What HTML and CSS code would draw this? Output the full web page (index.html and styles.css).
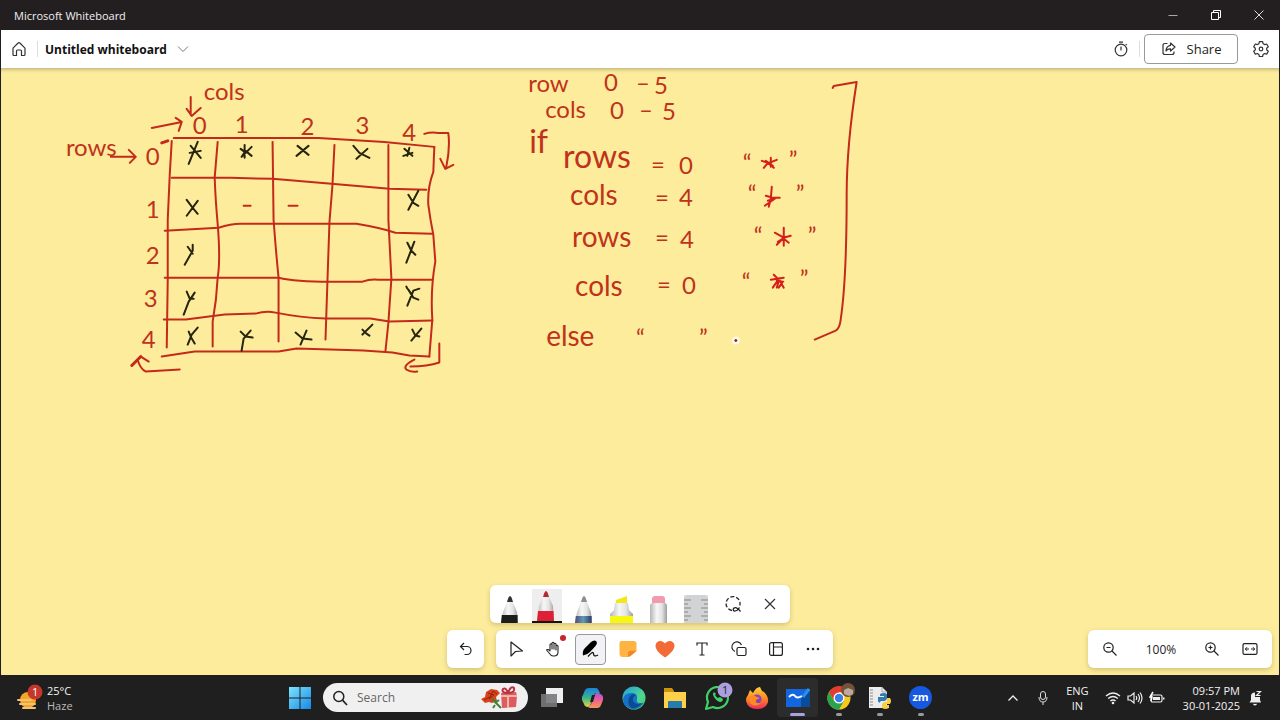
FILE: index.html
```html
<!DOCTYPE html>
<html lang="en">
<head>
<meta charset="utf-8">
<title>Microsoft Whiteboard</title>
<link rel="stylesheet" href="styles.css">
</head>
<body>
<header class="titlebar">
  <span class="titlebar-name">Microsoft Whiteboard</span>
  <div class="window-controls">
    <button aria-label="Minimize"><svg width="12" height="12" viewBox="0 0 12 12"><path d="M1.500 6.500h9" stroke="#a9a7a8"/></svg></button>
    <button aria-label="Restore"><svg width="12" height="12" viewBox="0 0 12 12"><path d="M1.500 3.500h7v7h-7zM3.500 3.500v-2h7v7h-2" stroke="#fff"/></svg></button>
    <button aria-label="Close"><svg width="12" height="12" viewBox="0 0 12 12"><path d="M1.500 1.500l9 9M10.500 1.500l-9 9" stroke="#ddd"/></svg></button>
  </div>
</header>

<nav class="appbar">
  <button class="icon-btn" aria-label="Home"><svg width="16" height="16" viewBox="0 0 16 16"><path d="M2 7.200 7.100 2q.9-.8 1.800 0L14 7.200v6.300q0 1-1 1h-2.500V10q0-1-1-1h-3q-1 0-1 1v4.500H3q-1 0-1-1z" stroke="#333" stroke-width="1.200"/></svg></button>
  <span class="divider"></span>
  <button class="board-name">Untitled whiteboard <svg width="12" height="8" viewBox="0 0 12 8"><path d="M1 1.500l5 5 5-5" stroke="#777"/></svg></button>
  <div class="appbar-end">
    <button class="icon-btn" aria-label="Timer"><svg width="16" height="16" viewBox="0 0 16 16"><circle cx="8" cy="9" r="5.800" stroke="#333" stroke-width="1.200"/><path d="M8 5.500V9.500M6 1.200h4M12.800 3.200l1 1" stroke="#333" stroke-width="1.200"/></svg></button>
    <span class="divider"></span>
    <button class="share"><svg width="16" height="16" viewBox="0 0 16 16"><path d="M6.500 2.500H4Q2 2.500 2 4.500v7q0 2 2 2h7q2 0 2-2v-1M9.500 2l4.500 4-4.500 4V7.800Q6.500 7.600 5 10q.2-5 4.500-5.600z" stroke="#333" stroke-width="1.200" stroke-linejoin="round"/></svg>Share</button>
    <button class="icon-btn" aria-label="Settings"><svg width="18" height="18" viewBox="0 0 18 18"><path d="M7.400 1.600h3.200l.5 2.100 1.500.9 2.100-.6 1.600 2.800-1.600 1.400v1.700l1.600 1.400-1.600 2.800-2.100-.6-1.500.9-.5 2.100H7.400l-.5-2.100-1.500-.9-2.100.6-1.600-2.800 1.600-1.400V8.200L1.700 6.800 3.300 4l2.100.6 1.500-.9z" stroke="#333" stroke-width="1.200" stroke-linejoin="round"/><circle cx="9" cy="9" r="1.800" stroke="#333" stroke-width="1.200"/></svg></button>
  </div>
</nav>

<main class="board">
  <svg class="ink" viewBox="0 68 1280 607" preserveAspectRatio="xMinYMin meet">
    <g class="red">
      <path d="M173 138H318L384 142 434 147M171 178H230L272 179 331 184 389 189 426 190M164 231Q180 230 218 228 230 224 240 224H356Q380 228 395 233L432 234M164 278H278Q295 282 330 282H362Q370 279 378 280H432M163 320H185L224 315 255 314Q265 311 275 313 300 318 325 319H370L389 322 432 321M161 357 194 352H278L296 349 363 351 392 353 409 356 429 357"/>
      <path d="M171 141 169 175 167 220V280L166 348M217 142 214 178Q215 203 217 224 220 260 217 278 216 300 212 322V347M272 142 273 220Q275 248 278 278V342M334 145 332 185 329 222 327 280 325 340M388 145 388 220 391 279 388 323 385 352M434 147 433 172Q427 188 428 205 430 220 433 235L435 262Q430 290 432 320L429 357"/>
      <path d="M151 128 181 122M175 118 181 122 178 131M190 97V115M186 109 191 116 200 108M110 157H135M128 150 135 157 129 163M424 134Q430 132 438 133H448Q450 148 446 167M440 159 445 169 453 165M439 344V363Q427 367 410 367M414 360Q402 366 406 370 410 373 417 372"/>
      <path d="M140 357 148 362M137 361Q140 370 145 372L179 370"/>
      <path class="heavy" d="M131 366 140 357M161 143 167 141"/>
      <path d="M833 88 834 86 857 82Q847 145 847 195 847 280 841 320 840 329 836 331L815 340"/>
      <path d="M243 206h7M288 206h9"/>
    </g>
    <g class="stars">
      <path d="M762 161 769 163 777 160M771 158V167M774 168 768 163 764 168M766 161 773 166"/>
      <path d="M772 187 771 199 769 207M766 196 773 198 780 198M775 199 765 206M768 201 774 199"/>
      <path d="M784 228V246M775 233 784 238 791 236M784 238 777 245M784 239 789 243M778 242 786 237"/>
      <path d="M774 275 780 281 784 288M771 280 784 278M777 288 780 278 773 288M777 281 783 282 779 288"/>
    </g>
    <g class="black">
      <path d="M197 142 188 164M190 146 200 158M189 153 200 151M244 145V158M251 147 241 157 245 151 251 156M240 149 244 152M297 146 308 155M308 146 296 156M353 146 359 153 369 158M367 149 356 159M404 149 412 156M412 153 403 156M409 148 407 156"/>
      <path d="M186 200 192 208 197 214M197 201 186 216M408 195 413 203 418 206M418 191 408 210M187 247 192 254M192 245V251L184 265M407 243 411 251 415 255M414 242 406 263M186 292 189 299H193M194 293 188 302 183 315M408 290 413 298 418 300M419 289 413 291 407 306M406 287l1 2"/>
      <path d="M188 332 191 339 194 344M197 328 191 335 187 345M240 332 245 337 252 338M250 331 243 339 241 351M295 333 302 339 311 340M306 331 300 345M362 330 366 334 369 336M372 325 362 335M412 330 415 336 419 337M421 329 411 341"/>
    </g>
    <g class="hand">
      <text x="203" y="100">cols</text>
      <text x="65" y="156">rows</text>
      <text x="145" y="165">0</text>
      <text x="192" y="134">0</text><text x="234" y="133">1</text><text x="300" y="135">2</text><text x="355" y="134">3</text><text x="402" y="141">4</text>
      <text x="145" y="218">1</text><text x="145" y="264">2</text><text x="143" y="307">3</text><text x="141" y="348">4</text>
      <text x="528" y="92">row</text><text x="604" y="91">0</text><text x="636" y="91">–</text><text x="654" y="94">5</text>
      <text x="545" y="118">cols</text><text x="610" y="119">0</text><text x="639" y="118">–</text><text x="662" y="120">5</text>
      <text class="tall" x="529" y="153">if</text>
      <text class="tall" x="563" y="168">rows</text><text x="651" y="173">=</text><text x="679" y="174">0</text><text x="743" y="171">“</text><text x="789" y="168">”</text>
      <text class="large" x="570" y="205">cols</text><text x="655" y="206">=</text><text x="679" y="206">4</text><text x="748" y="202">“</text><text x="796" y="202">”</text>
      <text class="large" x="572" y="247">rows</text><text x="655" y="246">=</text><text x="680" y="248">4</text><text x="754" y="244">“</text><text x="808" y="244">”</text>
      <text class="large" x="575" y="296">cols</text><text x="657" y="293">=</text><text x="682" y="294">0</text><text x="742" y="290">“</text><text x="800" y="287">”</text>
      <text class="large" x="546" y="346">else</text><text x="636" y="346">“</text><text x="699" y="346">”</text>
    </g>
    <circle cx="736" cy="341" r="4" fill="#fff" opacity=".75"/><circle cx="736" cy="341" r="1.500" fill="#8e211a"/>
  </svg>

  <div class="dock">
    <div class="panel pens">
      <button aria-label="Black pen"><svg width="30" height="32" viewBox="0 0 30 32"><path d="M5 32 7 21 12 9h4l5 12 1 11z" fill="url(#barrel)"/><path d="M11 11Q12.500 5 14 5t3 6z" fill="#333"/><path d="M5.800 24h15.800v8H5z" fill="#1c1c1c"/></svg></button>
      <button class="picked" aria-label="Red pen"><svg width="30" height="32" viewBox="0 0 30 32"><path d="M5 32 7 17 12 5h4l5 12 1 15z" fill="url(#barrel)"/><path d="M11 8Q12.500 2 14 2t3 6z" fill="#b42832"/><path d="M6 22h15.500l.5 10H5z" fill="#df1f36"/></svg></button>
      <button aria-label="Galaxy pen"><svg width="30" height="32" viewBox="0 0 30 32"><path d="M5 32 7 21 12 9h4l5 12 1 11z" fill="url(#barrel)"/><path d="M11 11Q12.500 5 14 5t3 6z" fill="#8b8e92"/><path d="M5.800 25h15.800v7H5z" fill="url(#galaxy)"/></svg></button>
      <button aria-label="Highlighter"><svg width="30" height="32" viewBox="0 0 30 32"><path d="M9 12V9l11-4v8z" fill="#f2e817"/><path d="M8 12h13l1 7 4 4v9H3v-9l4-4z" fill="url(#barrel)"/><path d="M3 25h23v7H3z" fill="#f6f814"/></svg></button>
      <button aria-label="Eraser"><svg width="30" height="32" viewBox="0 0 30 32"><path d="M8 13V8q0-3 3-3h7q3 0 3 3v5z" fill="#f29aae"/><path d="M6 15q0-3 3-3h11q3 0 3 3v17H6z" fill="url(#barrel)"/></svg></button>
      <button aria-label="Ruler"><svg width="30" height="32" viewBox="0 0 30 32"><path d="M3 6q0-2 2-2h20q2 0 2 2v26H3z" fill="#d2d3d4"/><path d="M3 9h7M3 13h4M3 17h7M3 21h4M3 25h7M3 29h4M27 9h-7M27 13h-4M27 17h-7M27 21h-4M27 25h-7M27 29h-4" stroke="#85888a"/></svg></button>
      <button class="mid" aria-label="Lasso select"><svg width="18" height="18" viewBox="0 0 18 18"><path d="M8 15.500A7 7 0 1 1 15.800 10.500" stroke="#222" stroke-width="1.300" stroke-dasharray="4 2"/><path d="M16.500 16.500q-4-5-6.500-3.500-1.500 2 0 3 3 .5 5.500-3.500" stroke="#222" stroke-width="1.300"/></svg></button>
      <button class="mid" aria-label="Close pens"><svg width="12" height="12" viewBox="0 0 12 12"><path d="M1 1l10 10M11 1 1 11" stroke="#333" stroke-width="1.200"/></svg></button>
    </div>
    <div class="tools">
      <div class="panel undo"><button aria-label="Undo"><svg width="16" height="16" viewBox="0 0 16 16"><path d="M6 2 2.500 5.500 6 9M2.500 5.500H9a4 4 0 0 1 0 8H6.500" stroke="#222" stroke-width="1.200"/></svg></button></div>
      <div class="panel toolbar">
        <button aria-label="Select"><svg width="18" height="18" viewBox="0 0 18 18"><path d="M3 2v14l4.500-4.500 7-.5z" stroke="#222" stroke-width="1.200" stroke-linejoin="round"/></svg></button>
        <button class="dot" aria-label="Pan"><svg width="18" height="18" viewBox="0 0 18 18"><path d="M5 10V4.500q1-1.500 2 0V9 3q1-1.500 2 0v6-5q1-1.500 2 0v6-4q1-1.200 2 0v6q0 4-4 4H8q-2 0-3.500-2.500L1.500 10q1.500-1.500 3.500 1z" stroke="#222" stroke-width="1.100" stroke-linejoin="round"/></svg></button>
        <button class="active" aria-label="Inking"><svg width="20" height="20" viewBox="0 0 20 20"><path d="M2 16.500Q1 12 4 9L10 3q3-2.500 5-1 2 2-.5 5L9 13Q6 16 2 16.500z" fill="#000"/><path d="M7 17.500q5-6 5.500-3 0 4 4.500 1.500" stroke="#111" stroke-width="1.300"/></svg></button>
        <button aria-label="Notes"><svg width="20" height="20" viewBox="0 0 20 20"><path d="M3.500 2H16q2.500 0 2.500 2.500V12q-7 6-9 6H4.500Q2 18 1.500 15.500V4q0-2 2-2z" fill="#ffb441"/><path d="M10 17.800v-3q0-3 3-3h5.300q-5.300 6-8.300 6z" fill="#f28729"/></svg></button>
        <button aria-label="Reactions"><svg width="20" height="20" viewBox="0 0 20 20"><path d="M10 18.500Q0 12 .5 6.500C1 1 7.500.5 10 4.500 12.500.5 19 1 19.500 6.500 20 12 10 18.500 10 18.500z" fill="#f36a36"/></svg></button>
        <button aria-label="Text"><svg width="16" height="16" viewBox="0 0 16 16"><path d="M3 4.500V2h10v2.500M8 2v12M5.500 14h5" stroke="#222" stroke-width="1.200"/></svg></button>
        <button aria-label="Shapes"><svg width="18" height="18" viewBox="0 0 18 18"><path d="M5 11.500A5 5 0 1 1 11.500 5" stroke="#222" stroke-width="1.200"/><rect x="7" y="7.500" width="9" height="8" rx="1.500" stroke="#222" stroke-width="1.200"/></svg></button>
        <button aria-label="Templates"><svg width="16" height="16" viewBox="0 0 16 16"><rect x="1.600" y="1.600" width="12.800" height="12.800" rx="2" stroke="#222" stroke-width="1.200"/><path d="M5.500 2v12M5.500 6h9" stroke="#222" stroke-width="1.200"/></svg></button>
        <button aria-label="More"><svg width="14" height="4" viewBox="0 0 14 4"><g fill="#222"><circle cx="2" cy="2" r="1.300"/><circle cx="7" cy="2" r="1.300"/><circle cx="12" cy="2" r="1.300"/></g></svg></button>
      </div>
    </div>
  </div>

  <div class="panel zoom">
    <button aria-label="Zoom out"><svg width="16" height="16" viewBox="0 0 16 16"><circle cx="6.500" cy="6.500" r="4.700" stroke="#222" stroke-width="1.200"/><path d="M10 10l4.500 4.500M4.500 6.500h4" stroke="#222" stroke-width="1.200"/></svg></button>
    <span>100%</span>
    <button aria-label="Zoom in"><svg width="16" height="16" viewBox="0 0 16 16"><circle cx="6.500" cy="6.500" r="4.700" stroke="#222" stroke-width="1.200"/><path d="M10 10l4.500 4.500M4.500 6.500h4M6.500 4.500v4" stroke="#222" stroke-width="1.200"/></svg></button>
    <button aria-label="Fit to screen"><svg width="16" height="14" viewBox="0 0 16 14"><rect x="1" y="1.600" width="14" height="10.800" rx="1.500" stroke="#222" stroke-width="1.200"/><path d="M3.500 7h3.500M9 7h3.500M5 5.200 3.300 7 5 8.800M11 5.200 12.700 7 11 8.800" stroke="#222"/></svg></button>
  </div>
</main>

<footer class="taskbar">
  <button class="weather">
    <svg width="27" height="28" viewBox="0 0 27 28"><circle cx="12" cy="16" r="8" fill="#f5a623"/><path d="M2 16h13M4 20h15M7 24h12" stroke="#f3c27a" stroke-width="2" stroke-linecap="round"/><circle cx="19" cy="8" r="7.500" fill="#c5372c"/><text x="16" y="12" class="badge-light">1</text></svg>
    <span class="weather-text"><span>25°C</span><span class="muted">Haze</span></span>
  </button>
  <div class="apps">
    <button class="app" aria-label="Start"><svg width="24" height="24" viewBox="0 0 24 24"><path d="M1 1h10.500v10.500H1zM12.500 1H23v10.500H12.500zM1 12.500h10.500V23H1zM12.500 12.500H23V23H12.500z" fill="url(#win)"/></svg></button>
    <label class="search"><svg width="16" height="16" viewBox="0 0 16 16"><circle cx="6.800" cy="6.500" r="5" stroke="#222" stroke-width="1.500"/><path d="M10.500 10.200 15 15" stroke="#222" stroke-width="1.700"/></svg><input type="text" placeholder="Search" aria-label="Search"><svg width="40" height="24" viewBox="0 0 40 24"><path d="M1 13l4-2 1-5 5-3 6 1 3 3-4 4 1 4-5 2-3-1-4 1z" fill="#d9431c"/><path d="M8 7l6 2-5 4 4-8 4 3M4 14l6-3" stroke="#8e2418"/><path d="M12 13l9 9M15 17l4-3M15 19l-2 3" stroke="#3f8438" stroke-width="2"/><path d="M21 7l15-1 1 4-1 11-14 1z" fill="#df5b62"/><path d="M28 7v15M21 10h16" stroke="#f3b9a6" stroke-width="2"/><path d="M28 7q-7 0-5-4 3-2 5 4 3-8 6-5 1 5-6 5" stroke="#b93140" stroke-width="2"/></svg></label>
    <button class="app" aria-label="Task view"><svg width="24" height="24" viewBox="0 0 24 24"><path d="M6 2h17v15H6z" fill="#efefef"/><path d="M1 8h16v13H1z" fill="#77787a" opacity=".9"/></svg></button>
    <button class="app" aria-label="Copilot"><svg width="24" height="24" viewBox="0 0 24 24"><path d="M8 2h7q2 0 3 3l1 2h-5l-4 10q-1 4-4 4-3-1-3-3L1 14q-1-3 1-5l2-5q1-2 4-2z" fill="url(#copA)"/><path d="M16 22H9q-2 0-2-2h1q2-1 3-4l3-8q1-2 4-1l3 2q2 2 1 5l-2 5q-1 3-4 3z" fill="url(#copB)"/><path d="M11 9h3l-2 7H9z" fill="#1f1f20"/></svg></button>
    <button class="app" aria-label="Edge"><svg width="24" height="24" viewBox="0 0 24 24"><circle cx="12" cy="12" r="11.500" fill="url(#edge)"/><path d="M1 14Q2 6 11 7q5 1 4 6-1 3 2 4 3 1 5-1-4 8-12 7Q2 22 1 14z" fill="#1572c9"/><path d="M9 22Q4 16 8 10q2-3 6-1-4 2-3 6 3 5 9 2-4 6-11 5z" fill="#0a4b91"/></svg></button>
    <button class="app" aria-label="File Explorer"><svg width="24" height="24" viewBox="0 0 24 24"><path d="M1 2h8l2 3v5H1z" fill="#cf940f"/><path d="M1 6h22v16H1z" fill="#ffd04a"/><path d="M5 22v-6q0-1 1-1h12q1 0 1 1v6z" fill="#247dac"/></svg></button>
    <button class="app" aria-label="WhatsApp"><svg class="wide" width="30" height="30" viewBox="0 0 30 30"><path d="M3 28 5 21A10.500 10.500 0 1 1 10 26z" stroke="#3fd266" stroke-width="2.200" stroke-linejoin="round"/><path d="M11 11q-2 2 0 5 3 5 7 5 2-1 2-3l-3-2-2 1q-2-1-3-3l1-1z" fill="#3fd266"/><circle cx="22" cy="9" r="7.500" fill="#a9a0dc"/><text x="19" y="13" class="badge-dark">1</text></svg></button>
    <button class="app" aria-label="Firefox"><svg width="24" height="24" viewBox="0 0 24 24"><path d="M3 9 5 4l3 3Q11 1 15 1l2 4 2 1q5 5 4 10-2 7-11 7T1 15q0-4 2-6z" fill="url(#fox)"/><circle cx="12" cy="13" r="4.500" fill="#8246bc"/><path d="M3 11q6-3 9 0l3 1-4 2q-1 4 5 3-6 5-11 0z" fill="#ff8a22"/></svg></button>
    <button class="app current running" aria-label="Whiteboard"><svg width="24" height="24" viewBox="0 0 24 24"><path d="M0 3h24v18H0z" fill="#1267e0"/><path d="M15 13 24 3v18h-9z" fill="#0b4c98"/><path d="M3 11q4-4 6-1t7 0" stroke="#fff" stroke-width="2"/><path d="M17 11 23 3" stroke="#2b8fe8" stroke-width="3"/></svg></button>
    <button class="app running" aria-label="Chrome"><svg class="wide" width="30" height="30" viewBox="0 0 30 30"><circle cx="13" cy="17" r="11.500" fill="#f8c81c"/><path d="M3 11A11.500 11.500 0 0 1 23 11H13l-5 9z" fill="#e33b2e"/><path d="M3 11A11.500 11.500 0 0 0 13 28.500l5-8.500-10 0z" fill="#2ba24c"/><circle cx="13" cy="17" r="5.500" fill="#fff"/><circle cx="13" cy="17" r="4.200" fill="#3c7ee8"/><circle cx="22" cy="9" r="7" fill="#76513a"/><path d="M18 9l4-2 5 2v4l-4 2-5-2z" fill="#b9aaa0"/></svg></button>
    <button class="app running" aria-label="Python IDLE"><svg width="24" height="24" viewBox="0 0 24 24"><path d="M1 1h13l5 5v16H1z" fill="#ececec"/><path d="M2 4h3M2 7h3M2 10h3M2 13h3M2 16h3M2 19h3" stroke="#888"/><path d="M14 1v5h5" stroke="#aaa"/><path d="M10 15v-4h6v-1h-4V8q4-2 7 0v5l-2 2h-4l-2 2z" fill="#347ab1"/><path d="M19 12h3q2 3 0 6h-4v1h3v3q-4 2-7 0v-4l2-2h3z" fill="#f9ce43"/></svg></button>
    <button class="app running" aria-label="Zoom"><span class="zm">zm</span></button>
  </div>
  <div class="tray">
    <button aria-label="Show hidden icons"><svg width="12" height="12" viewBox="0 0 12 12"><path d="M1.500 8.500 6 4l4.500 4.500" stroke="#eee" stroke-width="1.300"/></svg></button>
    <button aria-label="Microphone"><svg width="14" height="18" viewBox="0 0 14 18"><rect x="4.500" y="2.500" width="5" height="8" rx="2.500" stroke="#ddd"/><path d="M3 8q0 5 4 5t4-5M7 13V16" stroke="#ddd"/></svg></button>
    <button class="lang"><span>ENG</span><span>IN</span></button>
    <button class="status" aria-label="Network, sound and battery">
      <svg width="16" height="14" viewBox="0 0 16 14"><path d="M1 5q7-6 14 0M3.200 7.500q4.800-4 9.600 0M5.400 10q2.600-2 5.200 0" stroke="#eee" stroke-width="1.400"/><circle cx="8" cy="12" r="1.300" fill="#eee"/></svg>
      <svg width="16" height="14" viewBox="0 0 16 14"><path d="M1 5h2.500L7 2v10L3.500 9H1zM9 5q1.500 2 0 4M11 3q3 4 0 8M13 1.500q4 5.500 0 11" stroke="#eee" stroke-width="1.200"/></svg>
      <svg width="16" height="14" viewBox="0 0 16 14"><rect x="2" y="4" width="11" height="7" rx="1.500" stroke="#eee" stroke-width="1.200"/><path d="M4 6h7v3H4zM14 6.500h1.500v2H14z" fill="#eee"/><path d="M4 1 1 6h2L2 10" stroke="#fff" stroke-width="1.500"/></svg>
    </button>
    <button class="clock"><span>09:57 PM</span><span>30-01-2025</span></button>
    <button aria-label="Notifications"><svg width="14" height="16" viewBox="0 0 14 16"><path d="M1.500 12.500 3 10V6q0-3.500 4-3.500V7h5v3l1 2.500z" fill="#eee"/><path d="M5.500 14q1.500 1.500 3 0M8.500 1.500h4l-4 4h4" stroke="#eee" stroke-width="1.200"/></svg></button>
  </div>
</footer>

<svg class="defs" width="0" height="0" aria-hidden="true"><defs>
  <linearGradient id="barrel"><stop offset="0" stop-color="#b5b5b5"/><stop offset=".4" stop-color="#f7f7f7"/><stop offset=".7" stop-color="#e4e4e4"/><stop offset="1" stop-color="#9d9d9d"/></linearGradient>
  <linearGradient id="galaxy"><stop offset="0" stop-color="#55497c"/><stop offset=".5" stop-color="#5f9bb5"/><stop offset="1" stop-color="#303a68"/></linearGradient>
  <linearGradient id="win" x2="1" y2="1"><stop offset="0" stop-color="#7de3fb"/><stop offset="1" stop-color="#1689e8"/></linearGradient>
  <linearGradient id="edge" x2="1" y2="1"><stop offset="0" stop-color="#209ce3"/><stop offset=".6" stop-color="#4fd690"/><stop offset="1" stop-color="#43c86a"/></linearGradient>
  <linearGradient id="copA" x2="0" y2="1"><stop offset="0" stop-color="#1a82e4"/><stop offset=".5" stop-color="#36b48a"/><stop offset="1" stop-color="#e8d63b"/></linearGradient>
  <linearGradient id="copB" x2="0" y2="1"><stop offset="0" stop-color="#a752e2"/><stop offset=".5" stop-color="#ee628f"/><stop offset="1" stop-color="#f49b58"/></linearGradient>
  <linearGradient id="fox" x2="0" y2="1"><stop offset="0" stop-color="#ffd33b"/><stop offset=".5" stop-color="#ff8b22"/><stop offset="1" stop-color="#ed2c5c"/></linearGradient>
</defs></svg>
</body>
</html>
```
FILE: styles.css
```css
* { box-sizing: border-box; }
body {
  margin: 0;
  min-height: 100vh;
  display: grid;
  grid-template-rows: 30px 38px 1fr 45px;
  font-family: "Open Sans", "Noto Sans", sans-serif;
  font-size: 12px;
  color: #242424;
  background: #1f1f20;
}
button {
  padding: 0;
  border: 0;
  background: none;
  color: inherit;
  font: inherit;
  display: flex;
  align-items: center;
  justify-content: center;
}
svg { fill: none; flex: none; }
.defs { position: absolute; }

.titlebar {
  display: flex;
  align-items: center;
  justify-content: space-between;
  padding-left: 14px;
  background: #231f20;
  color: #f0f0f0;
  font-size: 11px;
}
.window-controls { display: flex; }
.window-controls button { width: 43px; height: 30px; }

.appbar {
  display: flex;
  align-items: center;
  margin: 0 1px;
  padding-left: 10px;
  background: #fff;
}
.icon-btn { width: 16px; height: 30px; }
.divider { width: 1px; height: 16px; margin: 0 7px 0 10px; background: #ddd; }
.board-name { gap: 10px; font-size: 12px; font-weight: 700; color: #111; }
.appbar-end { display: flex; align-items: center; margin-left: auto; padding-right: 10px; }
.appbar-end .divider { margin: 0 4px 0 10px; }
.share {
  width: 94px;
  height: 30px;
  gap: 10px;
  margin-right: 15px;
  border: 1px solid #999;
  border-radius: 4px;
  font-size: 13px;
}

.board {
  position: relative;
  margin: 0 1px;
  overflow: hidden;
  background: #fdec9b;
  box-shadow: inset 0 4px 4px -3px #b0a574;
}
.ink { display: block; width: 100%; height: auto; }
.red path { stroke: #c42a1b; stroke-width: 2; stroke-linecap: round; stroke-linejoin: round; }
.red .heavy { stroke-width: 3; }
.stars path { stroke: #d3201b; stroke-width: 2; stroke-linecap: round; }
.black path { stroke: #26240f; stroke-width: 2; stroke-linecap: round; stroke-linejoin: round; }
.hand text { font-family: Lato, sans-serif; font-size: 24px; fill: #bf321b; }
.hand .large { font-size: 28px; }
.hand .tall { font-size: 32px; }

.panel {
  display: flex;
  align-items: center;
  height: 38px;
  padding: 0 2px;
  border-radius: 6px;
  background: #fff;
  box-shadow: 0 2px 5px rgba(90, 75, 10, .25);
}
.panel button { width: 37px; height: 38px; }
.dock {
  position: absolute;
  inset: auto 0 7px;
  display: flex;
  flex-direction: column;
  align-items: center;
  gap: 7px;
}
.pens button { align-items: flex-end; }
.pens button.mid { align-items: center; }
.pens .picked { width: 30px; height: 34px; margin: 4px 4px 0 3px; background: #eee; border-bottom: 2px solid #111; }
.tools { display: flex; gap: 12px; }
.undo { padding: 0; }
.toolbar button { position: relative; }
.toolbar .active { width: 31px; height: 31px; margin: 0 3px; border: 1px solid #999; border-radius: 4px; background: #f2f2f6; }
.dot::after { content: ""; position: absolute; top: 5px; right: 6px; width: 6px; height: 6px; border-radius: 50%; background: #c4262e; }
.panel.zoom { position: absolute; right: 7px; bottom: 7px; padding-right: 4px; }
.zoom span { width: 62px; text-align: center; }
.zoom button { width: 40px; }
.zoom button:last-child { width: 36px; }

.taskbar { display: flex; align-items: center; color: #f2f2f2; font-size: 11px; line-height: 15px; }
.weather { flex: 0 0 279px; justify-content: flex-start; gap: 4px; padding-left: 16px; }
.weather-text { display: flex; flex-direction: column; align-items: flex-start; }
.muted { color: #bbb; }
.badge-light, .badge-dark { font-family: "Open Sans", sans-serif; font-size: 11px; fill: #fff; }
.badge-dark { fill: #26243a; }
.apps { display: flex; align-items: center; }
.app { position: relative; width: 41px; height: 39px; }
.current { background: #2c2c2d; border-radius: 4px; }
.wide { margin: 0 0 4px 4px; }
.running::after { content: ""; position: absolute; bottom: 1px; left: 18px; width: 6px; height: 3px; border-radius: 2px; background: #999; }
.current::after { left: 13px; width: 15px; background: #aaa2dc; }
.search {
  display: flex;
  align-items: center;
  width: 205px;
  height: 29px;
  margin: 0 3px;
  padding: 0 8px 0 9px;
  border-radius: 15px;
  background: #f1f0f1;
}
.search input { flex: 1; min-width: 0; margin-left: 9px; padding: 0; border: 0; background: none; font: inherit; font-size: 12px; outline: 0; }
.search input::placeholder { color: #666; opacity: 1; }
.zm { width: 23px; height: 23px; border-radius: 50%; background: #1659df; color: #fff; font-size: 11px; font-weight: 700; line-height: 21px; text-align: center; }
.tray { display: flex; align-items: center; margin-left: auto; padding-right: 18px; }
.tray button { min-width: 14px; }
.tray > button { margin-left: 16px; }
.lang, .clock { flex-direction: column; }
.tray .clock { align-items: flex-end; margin-left: 18px; }
.tray .status { gap: 6px; }
.tray .clock + button { margin-left: 8px; }
```
